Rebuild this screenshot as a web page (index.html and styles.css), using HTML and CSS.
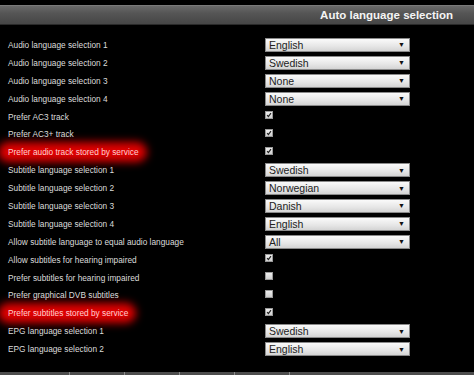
FILE: index.html
```html
<!DOCTYPE html>
<html lang="en">
<head>
    <meta charset="UTF-8">
    <title>Auto language selection</title>
    <link rel="stylesheet" href="styles.css">
</head>
<body>
    <div class="title-bar">
        <h1>Auto language selection</h1>
    </div>

    <div class="settings">
        <div class="label">Audio language selection 1</div>
        <div class="select"><span>English</span><i>&#9660;</i></div>

        <div class="label">Audio language selection 2</div>
        <div class="select"><span>Swedish</span><i>&#9660;</i></div>

        <div class="label">Audio language selection 3</div>
        <div class="select"><span>None</span><i>&#9660;</i></div>

        <div class="label">Audio language selection 4</div>
        <div class="select"><span>None</span><i>&#9660;</i></div>

        <div class="label">Prefer AC3 track</div>
        <div><span class="check on"><svg viewBox="0 0 8 8"><path d="M1.5 4.2 L3.2 6 L6.6 1.6"/></svg></span></div>

        <div class="label">Prefer AC3+ track</div>
        <div><span class="check on"><svg viewBox="0 0 8 8"><path d="M1.5 4.2 L3.2 6 L6.6 1.6"/></svg></span></div>

        <div class="label"><span class="glow">Prefer audio track stored by service</span></div>
        <div><span class="check on"><svg viewBox="0 0 8 8"><path d="M1.5 4.2 L3.2 6 L6.6 1.6"/></svg></span></div>

        <div class="label">Subtitle language selection 1</div>
        <div class="select"><span>Swedish</span><i>&#9660;</i></div>

        <div class="label">Subtitle language selection 2</div>
        <div class="select"><span>Norwegian</span><i>&#9660;</i></div>

        <div class="label">Subtitle language selection 3</div>
        <div class="select"><span>Danish</span><i>&#9660;</i></div>

        <div class="label">Subtitle language selection 4</div>
        <div class="select"><span>English</span><i>&#9660;</i></div>

        <div class="label">Allow subtitle language to equal audio language</div>
        <div class="select"><span>All</span><i>&#9660;</i></div>

        <div class="label">Allow subtitles for hearing impaired</div>
        <div><span class="check on"><svg viewBox="0 0 8 8"><path d="M1.5 4.2 L3.2 6 L6.6 1.6"/></svg></span></div>

        <div class="label">Prefer subtitles for hearing impaired</div>
        <div><span class="check"></span></div>

        <div class="label">Prefer graphical DVB subtitles</div>
        <div><span class="check"></span></div>

        <div class="label"><span class="glow">Prefer subtitles stored by service</span></div>
        <div><span class="check on"><svg viewBox="0 0 8 8"><path d="M1.5 4.2 L3.2 6 L6.6 1.6"/></svg></span></div>

        <div class="label">EPG language selection 1</div>
        <div class="select"><span>Swedish</span><i>&#9660;</i></div>

        <div class="label">EPG language selection 2</div>
        <div class="select"><span>English</span><i>&#9660;</i></div>
    </div>

    <div class="bottom-bar">
        <span></span><span></span><span></span><span></span><span></span>
    </div>
</body>
</html>
```

FILE: styles.css
```css
* {
    margin: 0;
    padding: 0;
    box-sizing: border-box;
}

body {
    background: #000;
    font-family: 'Liberation Sans', Arial, sans-serif;
    width: 474px;
    height: 375px;
    overflow: hidden;
    display: flex;
    flex-direction: column;
}

.title-bar {
    margin-top: 5px;
    height: 20px;
    background: linear-gradient(#6a6a6a, #555 40%, #464646);
    border-top: 1px solid #7a7a7a;
    border-bottom: 1px solid #2a2a2a;
    display: flex;
    align-items: center;
    justify-content: flex-end;
    padding-right: 21px;
}

.title-bar h1 {
    color: #f4f4f4;
    font-size: 11.5px;
    font-weight: bold;
}

.settings {
    margin-top: 11px;
    display: grid;
    grid-template-columns: 257px 145px;
    grid-auto-rows: 17.9px;
    padding-left: 8px;
    align-items: center;
}

.label {
    color: #dcdcdc;
    font-size: 8.3px;
    white-space: nowrap;
}

.glow {
    position: relative;
    color: #ffd0d0;
}

.glow::before {
    content: '';
    position: absolute;
    left: -10px;
    right: -8px;
    top: -5px;
    bottom: -5px;
    background: #e00000;
    border-radius: 12px;
    filter: blur(4px);
    z-index: -1;
}

.select {
    height: 14px;
    background: linear-gradient(#fafafa, #e6e6e6 60%, #d4d4d4);
    border: 1px solid #8a8a8a;
    display: flex;
    align-items: center;
    justify-content: space-between;
    padding: 0 4px 0 3px;
    color: #222;
    font-size: 10.5px;
}

.select i {
    font-style: normal;
    font-size: 7px;
    color: #111;
}

.check {
    display: block;
    width: 8px;
    height: 8px;
    margin-top: -3px;
    background: linear-gradient(#eee, #cfcfcf);
    border: 1px solid #999;
}

.check svg {
    display: block;
    width: 6px;
    height: 6px;
    fill: none;
    stroke: #222;
    stroke-width: 1.6;
}

.bottom-bar {
    margin-top: auto;
    height: 3px;
    background: #4d4d4d;
    display: flex;
}

.bottom-bar span {
    width: 55px;
    border-right: 1px solid #8a8a8a;
}

.bottom-bar span:first-child {
    width: 70px;
}
```
